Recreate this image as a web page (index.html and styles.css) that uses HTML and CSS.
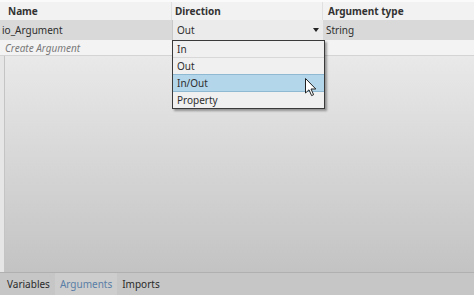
FILE: index.html
```html
<!DOCTYPE html>
<html lang="en">
<head>
  <meta charset="UTF-8" />
  <title>Arguments</title>
  <link rel="stylesheet" href="styles.css">
</head>
<body>
  <div class="panel">
    <div class="grid">
      <div class="row head">
        <div class="cell">Name</div>
        <div class="cell">Direction</div>
        <div class="cell">Argument type</div>
      </div>
      <div class="row selected">
        <div class="cell name">io_Argument</div>
        <div class="cell combo">
          <span>Out</span>
          <span class="arrow"></span>
        </div>
        <div class="cell type">String</div>
      </div>
      <div class="row create">
        <div class="cell">Create Argument</div>
      </div>
    </div>
    <div class="empty"></div>
    <div class="tabs">
      <span class="tab">Variables</span>
      <span class="tab active">Arguments</span>
      <span class="tab">Imports</span>
    </div>

    <ul class="dropdown">
      <li>In</li>
      <li>Out</li>
      <li class="hover">In/Out</li>
      <li>Property</li>
    </ul>

    <svg class="cursor" width="12" height="19" viewBox="0 0 12 19">
      <path d="M0.5 0.5 L0.5 15 L4 11.8 L6.6 17.6 L8.6 16.7 L6 11 L10.8 11 Z" fill="#fff" stroke="#222" stroke-width="1" stroke-linejoin="round"/>
    </svg>
  </div>
</body>
</html>
```

FILE: styles.css
```css
body {
  margin: 0;
  font-family: "Noto Sans", "Open Sans", sans-serif;
  font-size: 10px;
  color: #2e2e2e;
}
.panel {
  position: relative;
  width: 474px;
  height: 295px;
  display: flex;
  flex-direction: column;
  background: #e6e6e6;
  overflow: hidden;
}
.grid {
  background: #f1f1f1;
  border-top: 2px solid #fafafa;
}
.row {
  display: grid;
  grid-template-columns: 172px 151px 1fr;
  align-items: center;
}
.head {
  height: 18px;
  font-weight: bold;
  background: #f2f2f2;
  color: #333;
}
.head .cell {
  padding-left: 8px;
  border-right: 1px solid #e0e0e0;
  height: 18px;
  line-height: 18px;
}
.head .cell:nth-child(2) {
  padding-left: 3px;
}
.head .cell:nth-child(3) {
  padding-left: 5px;
  border-right: none;
}
.selected {
  height: 20px;
  background: #d9d9d9;
}
.selected .name {
  padding-left: 2px;
}
.combo {
  height: 20px;
  display: flex;
  align-items: center;
  justify-content: space-between;
  padding: 0 4px;
  background: #ebebeb;
  border-left: 1px solid #c8c8c8;
  box-sizing: border-box;
}
.arrow {
  width: 0;
  height: 0;
  border-left: 3px solid transparent;
  border-right: 3px solid transparent;
  border-top: 4px solid #222;
}
.type {
  padding-left: 3px;
}
.create {
  height: 15px;
  border-bottom: 1px solid #d4d4d4;
  background: #f3f3f3;
}
.create .cell {
  padding-left: 5px;
  font-style: italic;
  color: #7a7a7a;
}
.empty {
  flex: 1;
  margin-left: 4px;
  border-left: 1px solid #c4c4c4;
  background: linear-gradient(#e9e9e9, #c3c3c3);
}
.tabs {
  height: 22px;
  display: flex;
  align-items: center;
  border-top: 1px solid #b0b0b0;
  background: #c6c6c6;
  padding-left: 2px;
}
.tab {
  padding: 0 5px;
  height: 22px;
  line-height: 22px;
  color: #2a2a2a;
}
.tab.active {
  color: #5a7ea6;
  background: #cdcdcd;
}
.dropdown {
  position: absolute;
  left: 172px;
  top: 40px;
  width: 153px;
  margin: 0;
  padding: 0;
  list-style: none;
  background: #f0f0f0;
  border: 1px solid #3a3a3a;
  box-sizing: border-box;
  box-shadow: 2px 2px 2px rgba(0, 0, 0, 0.35);
}
.dropdown li {
  height: 16px;
  line-height: 16px;
  padding-left: 4px;
  border-bottom: 1px solid #d8d8d8;
}
.dropdown li:last-child {
  border-bottom: none;
}
.dropdown .hover {
  background: #b3d6ea;
  border-top: 1px solid #8fb8d2;
  border-bottom: 1px solid #8fb8d2;
  margin-top: -1px;
}
.cursor {
  position: absolute;
  left: 305px;
  top: 78px;
}
```
